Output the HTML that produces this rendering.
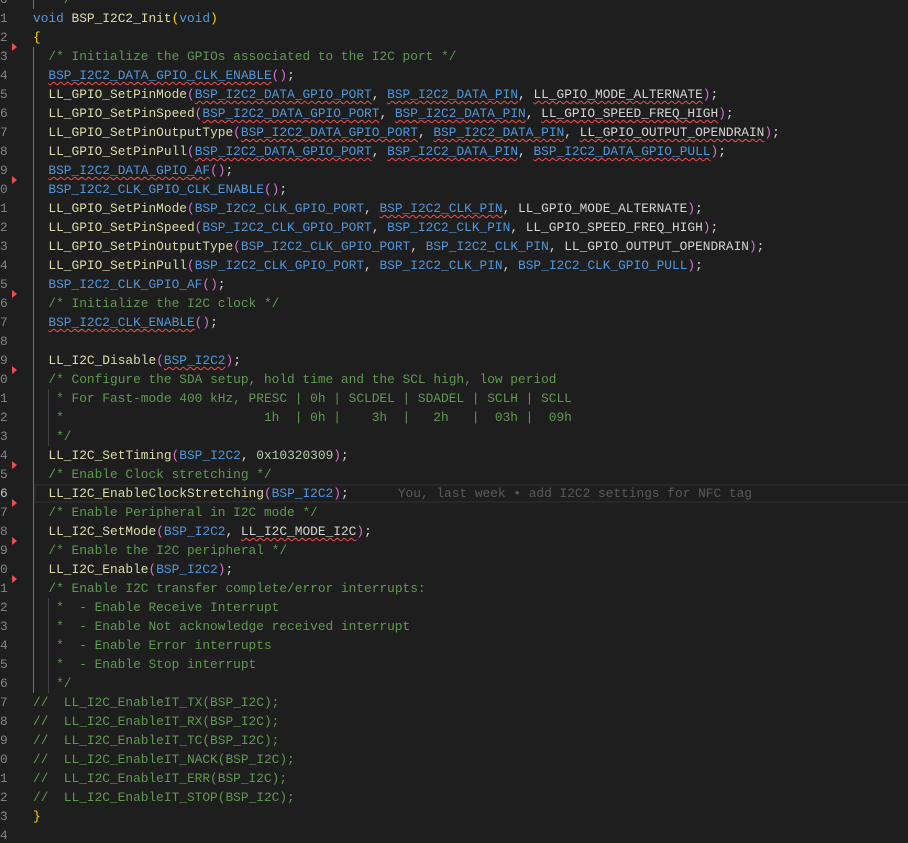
<!DOCTYPE html>
<html><head><meta charset="utf-8"><style>
html,body{margin:0;padding:0;background:#1e1e1e;width:908px;height:843px;overflow:hidden}
#w{position:relative;width:908px;height:843px;overflow:hidden;font-family:"Liberation Mono",monospace;font-size:12.83px;line-height:19px}
pre{position:absolute;margin:0;font:inherit;line-height:19px}
#n{left:0;top:-10px;color:#858585}
#n b{font-weight:normal;color:#c6c6c6}
#c{left:33px;top:-10px;color:#d4d4d4}
.f{color:#dcdcaa}.m{color:#4f97dc}.c{color:#5f9a50}.k{color:#569cd6}.y{color:#ffd700}.p{color:#da70d6}.h{color:#b5cea8}.g{color:#5a5a5a;position:relative;left:3px}
.s{text-decoration:underline wavy #f14c4c 1px;text-underline-offset:2px;text-decoration-skip-ink:none}
.i{position:absolute;width:1px;background:#707070}
.j{position:absolute;width:1px;background:#404040}
.t{position:absolute;left:12px;width:0;height:0;border-left:5px solid #f14c4c;border-top:4px solid transparent;border-bottom:4px solid transparent}
#a{position:absolute;left:34px;top:484px;width:874px;height:15px;border:2px solid #282828;border-right:0}
</style></head><body><div id="w">
<div id="a"></div>
<div class="i" style="left:33px;top:0;height:9px"></div>
<div class="i" style="left:33px;top:47px;height:646px"></div>
<div class="j" style="left:48px;top:389px;height:57px"></div>
<div class="j" style="left:48px;top:598px;height:95px"></div>
<div class="t" style="top:43px"></div><div class="t" style="top:176px"></div><div class="t" style="top:290px"></div><div class="t" style="top:366px"></div><div class="t" style="top:461px"></div><div class="t" style="top:499px"></div><div class="t" style="top:537px"></div><div class="t" style="top:575px"></div>
<pre id="n">0
1
2
3
4
5
6
7
8
9
0
1
2
3
4
5
6
7
8
9
0
1
2
3
4
5
<b>6</b>
7
8
9
0
1
2
3
4
5
6
7
8
9
0
1
2
3
4</pre>
<pre id="c"><span class="c">   */</span>
<span class="k">void</span> <span class="f">BSP_I2C2_Init</span><span class="y">(</span><span class="k">void</span><span class="y">)</span>
<span class="y">{</span>
  <span class="c">/* Initialize the GPIOs associated to the I2C port */</span>
  <span class="m s">BSP_I2C2_DATA_GPIO_CLK_ENABLE</span><span class="p">()</span>;
  <span class="f">LL_GPIO_SetPinMode</span><span class="p">(</span><span class="m s">BSP_I2C2_DATA_GPIO_PORT</span>, <span class="m s">BSP_I2C2_DATA_PIN</span>, <span class="s">LL_GPIO_MODE_ALTERNATE</span><span class="p">)</span>;
  <span class="f">LL_GPIO_SetPinSpeed</span><span class="p">(</span><span class="m s">BSP_I2C2_DATA_GPIO_PORT</span>, <span class="m s">BSP_I2C2_DATA_PIN</span>, <span class="s">LL_GPIO_SPEED_FREQ_HIGH</span><span class="p">)</span>;
  <span class="f">LL_GPIO_SetPinOutputType</span><span class="p">(</span><span class="m s">BSP_I2C2_DATA_GPIO_PORT</span>, <span class="m s">BSP_I2C2_DATA_PIN</span>, <span class="s">LL_GPIO_OUTPUT_OPENDRAIN</span><span class="p">)</span>;
  <span class="f">LL_GPIO_SetPinPull</span><span class="p">(</span><span class="m s">BSP_I2C2_DATA_GPIO_PORT</span>, <span class="m s">BSP_I2C2_DATA_PIN</span>, <span class="m s">BSP_I2C2_DATA_GPIO_PULL</span><span class="p">)</span>;
  <span class="m s">BSP_I2C2_DATA_GPIO_AF</span><span class="p">()</span>;
  <span class="m">BSP_I2C2_CLK_GPIO_CLK_ENABLE</span><span class="p">()</span>;
  <span class="f">LL_GPIO_SetPinMode</span><span class="p">(</span><span class="m">BSP_I2C2_CLK_GPIO_PORT</span>, <span class="m s">BSP_I2C2_CLK_PIN</span>, LL_GPIO_MODE_ALTERNATE<span class="p">)</span>;
  <span class="f">LL_GPIO_SetPinSpeed</span><span class="p">(</span><span class="m">BSP_I2C2_CLK_GPIO_PORT</span>, <span class="m">BSP_I2C2_CLK_PIN</span>, LL_GPIO_SPEED_FREQ_HIGH<span class="p">)</span>;
  <span class="f">LL_GPIO_SetPinOutputType</span><span class="p">(</span><span class="m">BSP_I2C2_CLK_GPIO_PORT</span>, <span class="m">BSP_I2C2_CLK_PIN</span>, LL_GPIO_OUTPUT_OPENDRAIN<span class="p">)</span>;
  <span class="f">LL_GPIO_SetPinPull</span><span class="p">(</span><span class="m">BSP_I2C2_CLK_GPIO_PORT</span>, <span class="m">BSP_I2C2_CLK_PIN</span>, <span class="m">BSP_I2C2_CLK_GPIO_PULL</span><span class="p">)</span>;
  <span class="m">BSP_I2C2_CLK_GPIO_AF</span><span class="p">()</span>;
  <span class="c">/* Initialize the I2C clock */</span>
  <span class="m s">BSP_I2C2_CLK_ENABLE</span><span class="p">()</span>;

  <span class="f">LL_I2C_Disable</span><span class="p">(</span><span class="m s">BSP_I2C2</span><span class="p">)</span>;
  <span class="c">/* Configure the SDA setup, hold time and the SCL high, low period</span>
<span class="c">   * For Fast-mode 400 kHz, PRESC | 0h | SCLDEL | SDADEL | SCLH | SCLL</span>
<span class="c">   *                          1h  | 0h |    3h  |   2h   |  03h |  09h</span>
<span class="c">   */</span>
  <span class="f">LL_I2C_SetTiming</span><span class="p">(</span><span class="m">BSP_I2C2</span>, <span class="h">0x10320309</span><span class="p">)</span>;
  <span class="c">/* Enable Clock stretching */</span>
  <span class="f">LL_I2C_EnableClockStretching</span><span class="p">(</span><span class="m">BSP_I2C2</span><span class="p">)</span>;      <span class="g">You, last week • add I2C2 settings for NFC tag</span>
  <span class="c">/* Enable Peripheral in I2C mode */</span>
  <span class="f">LL_I2C_SetMode</span><span class="p">(</span><span class="m">BSP_I2C2</span>, <span class="s">LL_I2C_MODE_I2C</span><span class="p">)</span>;
  <span class="c">/* Enable the I2C peripheral */</span>
  <span class="f">LL_I2C_Enable</span><span class="p">(</span><span class="m">BSP_I2C2</span><span class="p">)</span>;
  <span class="c">/* Enable I2C transfer complete/error interrupts:</span>
<span class="c">   *  - Enable Receive Interrupt</span>
<span class="c">   *  - Enable Not acknowledge received interrupt</span>
<span class="c">   *  - Enable Error interrupts</span>
<span class="c">   *  - Enable Stop interrupt</span>
<span class="c">   */</span>
<span class="c">//  LL_I2C_EnableIT_TX(BSP_I2C);</span>
<span class="c">//  LL_I2C_EnableIT_RX(BSP_I2C);</span>
<span class="c">//  LL_I2C_EnableIT_TC(BSP_I2C);</span>
<span class="c">//  LL_I2C_EnableIT_NACK(BSP_I2C);</span>
<span class="c">//  LL_I2C_EnableIT_ERR(BSP_I2C);</span>
<span class="c">//  LL_I2C_EnableIT_STOP(BSP_I2C);</span>
<span class="y">}</span></pre>
</div></body></html>
